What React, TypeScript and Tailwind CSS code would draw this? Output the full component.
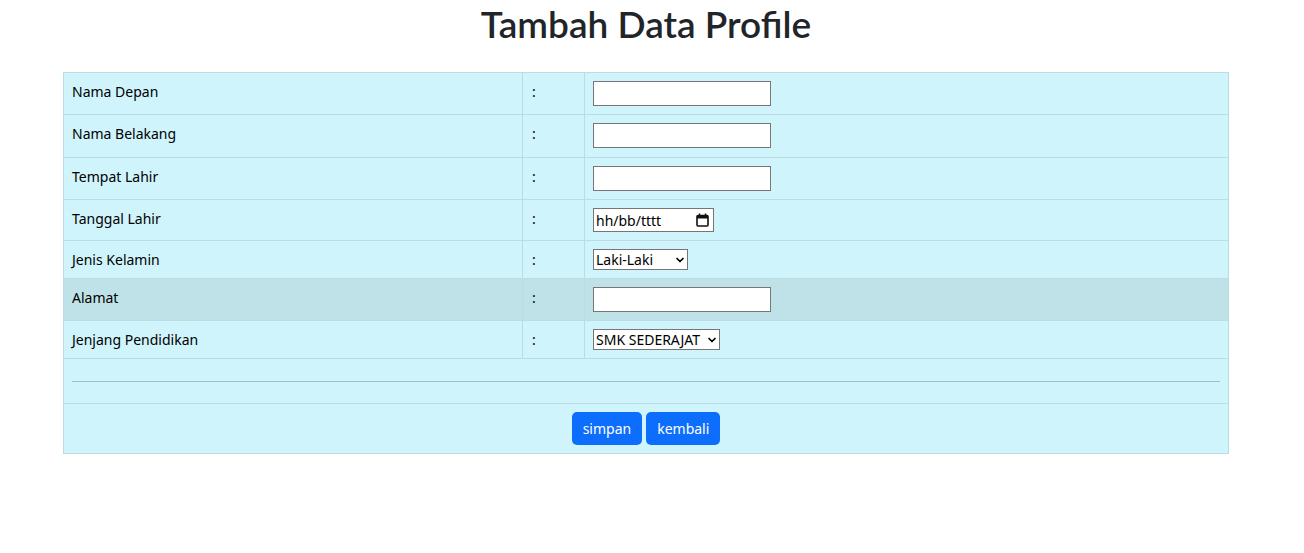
import { ChevronDown } from 'lucide-react';

const font = { fontFamily: '"Noto Sans", "Segoe UI", Arial, sans-serif' };

function TextField() {
  return <input type="text" className="block h-[25px] w-[178px] border border-[#767676] bg-white px-[2px] text-[13px]" />;
}

function DateField() {
  return (
    <div className="flex h-[24px] w-[121px] items-center justify-between border border-[#767676] bg-white pl-[2px] pr-[4px] text-[14px] text-black">
      <span>hh/bb/tttt</span>
      <svg width="13" height="14" viewBox="0 0 13 14" fill="none">
        <rect x="1" y="2.5" width="11" height="10.5" rx="1" stroke="#111" strokeWidth="1.6" />
        <rect x="1" y="2.5" width="11" height="3" fill="#111" />
        <line x1="3.5" y1="0.5" x2="3.5" y2="3" stroke="#111" strokeWidth="1.5" />
        <line x1="9.5" y1="0.5" x2="9.5" y2="3" stroke="#111" strokeWidth="1.5" />
      </svg>
    </div>
  );
}

function SelectField({ options, width }: { options: string[]; width: string }) {
  return (
    <div className={`relative inline-block ${width}`}>
      <select className="block h-[21px] w-full appearance-none border border-[#767676] bg-white pl-[2px] pr-[16px] text-[14px] leading-[19px] text-black">
        {options.map((o) => (
          <option key={o}>{o}</option>
        ))}
      </select>
      <ChevronDown className="pointer-events-none absolute right-[2px] top-[5px] h-[12px] w-[12px] text-black" strokeWidth={3.5} />
    </div>
  );
}

const rows = [
  { label: 'Nama Depan', field: <TextField /> },
  { label: 'Nama Belakang', field: <TextField />, tall: true },
  { label: 'Tempat Lahir', field: <TextField /> },
  { label: 'Tanggal Lahir', field: <DateField /> },
  { label: 'Jenis Kelamin', field: <SelectField options={['Laki-Laki', 'Perempuan']} width="w-[95px]" /> },
  { label: 'Alamat', field: <TextField />, hover: true },
  { label: 'Jenjang Pendidikan', field: <SelectField options={['SMK SEDERAJAT', 'SMP', 'SD']} width="w-[127px]" /> },
];

export default function App() {
  return (
    <div className="min-h-[553px] w-[1292px] bg-white" style={font}>
      <h1
        className="text-center text-[37px] font-semibold leading-[48px] text-[#212529]"
        style={{ fontFamily: 'Lato, "Noto Sans", sans-serif' }}
      >
        Tambah Data Profile
      </h1>

      <div className="mx-auto mt-6 w-[1166px]">
        <table className="w-full border-collapse border border-[#badce3] bg-[#cff4fc] text-[14px] text-black">
          <tbody>
            {rows.map((row) => (
              <tr key={row.label} className={`border-b border-[#badce3] ${row.hover ? 'bg-[#bfe2e8]' : ''}`}>
                <td className="w-[459px] border-r border-[#badce3] p-2 align-top leading-[21px]">{row.label}</td>
                <td className="w-[62px] border-r border-[#badce3] p-2 pl-[9px] align-top leading-[21px]">:</td>
                <td className={`p-2 align-top ${row.tall ? 'pb-[9px]' : ''}`}>{row.field}</td>
              </tr>
            ))}
            <tr className="border-b border-[#badce3]">
              <td colSpan={3} className="px-2 pb-[21px] pt-[22px]">
                <div className="h-px bg-[#a3bfc5]" />
              </td>
            </tr>
            <tr>
              <td colSpan={3} className="p-2 text-center">
                <div className="flex justify-center gap-1">
                  <button className="h-[33px] rounded-[5px] bg-[#0d6efd] px-[11px] text-[14px] text-white">simpan</button>
                  <button className="h-[33px] rounded-[5px] bg-[#0d6efd] px-[11px] text-[14px] text-white">kembali</button>
                </div>
              </td>
            </tr>
          </tbody>
        </table>
      </div>
    </div>
  );
}
